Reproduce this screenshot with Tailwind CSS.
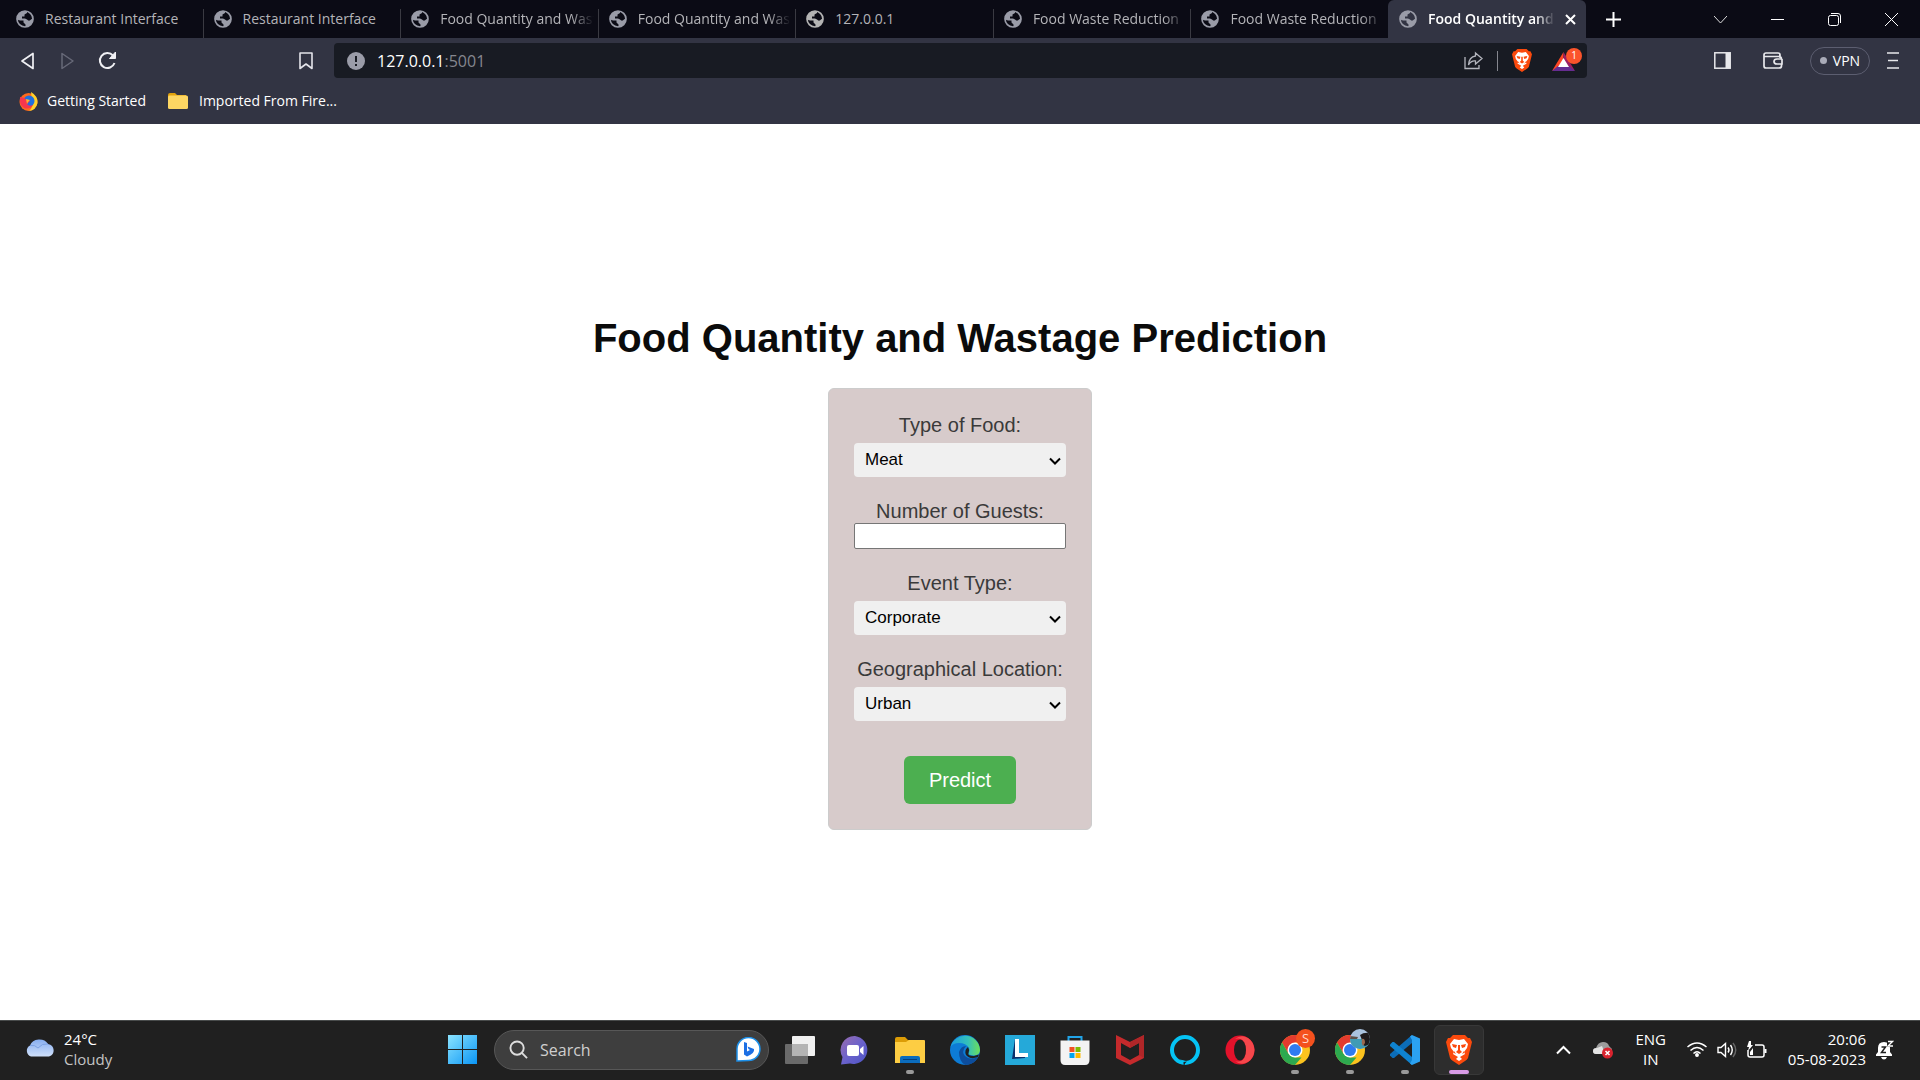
<!DOCTYPE html>
<html lang="en">
<head>
  <meta charset="UTF-8" />
  <meta name="viewport" content="width=device-width, initial-scale=1.0" />
  <title>Food Quantity and Wastage Prediction</title>
  <script src="https://cdn.jsdelivr.net/npm/@tailwindcss/browser@4"></script>
</head>
<body class="flex min-h-screen flex-col bg-white font-['Open_Sans','Noto_Sans',sans-serif]">
  <!-- shared icons -->
  <svg class="hidden">
    <defs>
      <symbol id="globe" viewBox="0 0 18 18">
        <circle cx="9" cy="9" r="8" fill="none" stroke="currentColor" stroke-width="1.7" />
        <path fill="currentColor" d="M9 1C4 1 .8 5 1 9.500L4 10.500H7.500V12.500L9.500 14.500V17C14 16.500 17 13 17 9V8L15 9.500C14 11 12 11 11 9.500L9 8.500H6V6.500H8.500V4.500L11 3V1.500Z" />
      </symbol>
      <symbol id="lion" viewBox="0 0 26 30">
        <path d="M7 0H19L22 3H24L26 7L25 11L22 23Q21 25 19 26L13 30L7 26Q5 25 4 23L1 11L0 7L2 3H4Z" fill="#fb4a0d" />
        <path d="M8 4L13 5L18 4L22 9L21 13L18 17L19 19L14 22L16 24L13 26L10 24L12 22L7 19L8 17L5 13L4 9Z" fill="#fff" />
        <path d="M6 9L11 10L10 13L7 12ZM20 9L15 10L16 13L19 12ZM12 10H14V15L16 17L13 19L10 17L12 15ZM8 16L10 19L8 18ZM18 16L16 19L18 18Z" fill="#fb4a0d" />
      </symbol>
      <symbol id="caret" viewBox="0 0 12 8">
        <path d="M1 1.500L6 6.500L11 1.500" fill="none" stroke="currentColor" stroke-width="2" />
      </symbol>
      <symbol id="chrome" viewBox="0 0 30 30">
        <circle cx="15" cy="15" r="15" fill="#fcc31e" />
        <path d="M2 7.500A15 15 0 0 1 28 7.500H15L8.500 18.750Z" fill="#e33b2e" />
        <path d="M2 7.500L8.500 18.750L15 22.500H21.500L15 30A15 15 0 0 1 2 7.500Z" fill="#2da94f" />
        <circle cx="15" cy="15" r="7.500" fill="#fff" />
        <circle cx="15" cy="15" r="6" fill="#2f7bf0" />
      </symbol>
    </defs>
  </svg>

  <header class="bg-[#323443] text-white">
    <!-- tab strip -->
    <div class="flex h-[38px] bg-[#0b0b15] text-sm text-[#b4b4b8]">
      <div class="flex min-w-0 flex-1 pl-1.5">
        <a href="#" class="flex min-w-0 flex-1 items-center gap-[11px] pr-1 pl-2.5"><svg class="size-[18px] shrink-0 text-[#9a9ca8]"><use href="#globe" /></svg><span class="overflow-hidden whitespace-nowrap">Restaurant Interface</span></a>
        <span class="mt-[9px] w-px bg-[#3a3a42]"></span>
        <a href="#" class="flex min-w-0 flex-1 items-center gap-[11px] pr-1 pl-2.5"><svg class="size-[18px] shrink-0 text-[#9a9ca8]"><use href="#globe" /></svg><span class="overflow-hidden whitespace-nowrap">Restaurant Interface</span></a>
        <span class="mt-[9px] w-px bg-[#3a3a42]"></span>
        <a href="#" class="flex min-w-0 flex-1 items-center gap-[11px] pr-1 pl-2.5"><svg class="size-[18px] shrink-0 text-[#9a9ca8]"><use href="#globe" /></svg><span class="overflow-hidden mask-r-from-85% whitespace-nowrap">Food Quantity and Wastage Prediction</span></a>
        <span class="mt-[9px] w-px bg-[#3a3a42]"></span>
        <a href="#" class="flex min-w-0 flex-1 items-center gap-[11px] pr-1 pl-2.5"><svg class="size-[18px] shrink-0 text-[#9a9ca8]"><use href="#globe" /></svg><span class="overflow-hidden mask-r-from-85% whitespace-nowrap">Food Quantity and Wastage Prediction</span></a>
        <span class="mt-[9px] w-px bg-[#3a3a42]"></span>
        <a href="#" class="flex min-w-0 flex-1 items-center gap-[11px] pr-1 pl-2.5"><svg class="size-[18px] shrink-0 text-[#b4b4b4]"><use href="#globe" /></svg><span class="overflow-hidden whitespace-nowrap">127.0.0.1</span></a>
        <span class="mt-[9px] w-px bg-[#3a3a42]"></span>
        <a href="#" class="flex min-w-0 flex-1 items-center gap-[11px] pr-1 pl-2.5"><svg class="size-[18px] shrink-0 text-[#9a9ca8]"><use href="#globe" /></svg><span class="flex-1 overflow-hidden mask-r-from-85% whitespace-nowrap">Food Waste Reduction</span></a>
        <span class="mt-[9px] w-px bg-[#3a3a42]"></span>
        <a href="#" class="flex min-w-0 flex-1 items-center gap-[11px] pr-1 pl-2.5"><svg class="size-[18px] shrink-0 text-[#9a9ca8]"><use href="#globe" /></svg><span class="flex-1 overflow-hidden mask-r-from-85% whitespace-nowrap">Food Waste Reduction</span></a>
        <div class="flex w-[198px] shrink-0 items-center rounded-t-md bg-[#323443] pr-2.5 pl-[11px]">
          <a href="#" class="flex min-w-0 flex-1 items-center gap-[11px] font-semibold text-white"><svg class="size-[18px] shrink-0 text-[#9a9ca8]"><use href="#globe" /></svg><span class="overflow-hidden mask-r-from-85% whitespace-nowrap">Food Quantity and Wastage</span></a>
          <button aria-label="Close tab" class="ml-2.5"><svg class="size-[11px]" viewBox="0 0 11 11" fill="none" stroke="#fff" stroke-width="2"><path d="M1 1L10 10M10 1L1 10" /></svg></button>
        </div>
      </div>
      <div class="flex w-[334px] shrink-0 items-center text-white">
        <button aria-label="New tab" class="ml-5"><svg class="size-[15px]" viewBox="0 0 15 15" stroke="#fff" stroke-width="2"><path d="M7.500 0V15M0 7.500H15" /></svg></button>
        <div class="flex flex-1 items-center justify-end gap-11 pr-[22px]">
          <button aria-label="Search tabs"><svg class="size-[13px]" viewBox="0 0 13 13" fill="none" stroke="#ddd"><path d="M0 3L6.500 10L13 3" /></svg></button>
          <button aria-label="Minimize"><svg class="size-[13px]" viewBox="0 0 13 13" stroke="#fff"><path d="M0 6.500H13" /></svg></button>
          <button aria-label="Restore"><svg class="size-[13px]" viewBox="0 0 13 13" fill="none" stroke="#fff"><rect x=".5" y="2.500" width="10" height="10" rx="2" /><path d="M3 .5H10Q12.500 .5 12.500 3V10" /></svg></button>
          <button aria-label="Close window"><svg class="size-[13px]" viewBox="0 0 13 13" stroke="#fff"><path d="M0 0L13 13M13 0L0 13" /></svg></button>
        </div>
      </div>
    </div>

    <!-- toolbar -->
    <div class="flex h-[45px] items-center">
      <div class="flex w-[334px] shrink-0 items-center pr-[21px] pl-5">
        <button aria-label="Back"><svg class="h-[18px] w-[15px]" viewBox="0 0 15 18" fill="none" stroke="#f0f0f4" stroke-width="1.700" stroke-linejoin="round"><path d="M13 1.500V16.500L2 9Z" /></svg></button>
        <button aria-label="Forward" class="ml-[26px]"><svg class="h-[18px] w-[15px]" viewBox="0 0 15 18" fill="none" stroke="#676978" stroke-width="1.500" stroke-linejoin="round"><path d="M1 1.500V16.500L12 9Z" /></svg></button>
        <button aria-label="Reload" class="ml-[22px]"><svg class="size-[19px]" viewBox="0 0 19 19" fill="none" stroke="#f0f0f4" stroke-width="2"><path d="M15 4.500A7.500 7.500 0 1 0 16.500 12" /><path d="M17.500 1V7.500H11.500Z" fill="#f0f0f4" stroke-width="1" /></svg></button>
        <button aria-label="Bookmark this page" class="ml-auto"><svg class="h-[18px] w-3.5" viewBox="0 0 14 18" fill="none" stroke="#e4e4ea" stroke-width="1.600" stroke-linejoin="round"><path d="M1 1H13V16.500L7 12L1 16.500Z" /></svg></button>
      </div>
      <div class="flex h-[35px] min-w-0 flex-1 items-center rounded bg-[#181b23] pr-[5px] pl-[13px]">
        <svg class="size-[18px]" viewBox="0 0 18 18"><circle cx="9" cy="9" r="9" fill="#9a9ca8" /><path d="M9 4V10M9 12V14" stroke="#181b23" stroke-width="2" /></svg>
        <a href="#" class="ml-3 text-base text-white">127.0.0.1<span class="text-[#85878f]">:5001</span></a>
        <div class="ml-auto flex items-center">
          <button aria-label="Share"><svg class="size-[19px]" viewBox="0 0 19 19" fill="none" stroke="#b4b6be" stroke-width="1.300"><path d="M1 6V17.500H15V14" /><path d="M11.500 2L18 7.500L11.500 13V10Q7 9.500 4.500 14Q5 6 11.500 5Z" /></svg></button>
          <span class="ml-3.5 h-5 w-px bg-[#85878f]"></span>
          <button aria-label="Brave Shields" class="ml-3.5"><svg class="h-[23px] w-5"><use href="#lion" /></svg></button>
          <button aria-label="Brave Rewards" class="relative ml-5">
            <svg class="h-[22px] w-[30px]" viewBox="0 0 30 22"><path d="M11.500 2L0 21L11.500 15Z" fill="#ff4724" /><path d="M11.500 2L23 21L11.500 15Z" fill="#9e1f63" /><path d="M0 21H23L17 16H6Z" fill="#662d91" /><path d="M11.500 8L6 17H17Z" fill="#fff" /></svg>
            <span class="absolute -top-0.5 right-0 flex size-4 items-center justify-center rounded-full bg-[#fb542b] text-[10px] text-white">1</span>
          </button>
        </div>
      </div>
      <div class="flex w-[333px] shrink-0 items-center justify-end pr-[21px]">
        <button aria-label="Sidebar"><svg class="size-[17px]" viewBox="0 0 17 17"><rect x=".8" y=".8" width="15.400" height="15.400" fill="none" stroke="#e8e8ec" stroke-width="1.500" /><path d="M11.500 1H16V16H11.500Z" fill="#e8e8ec" /></svg></button>
        <button aria-label="Wallet" class="ml-8"><svg class="h-[17px] w-5" viewBox="0 0 20 17" fill="none" stroke="#e8e8ec" stroke-width="1.700"><path d="M17 6V3Q17 1 15 1H3Q1 1 1 3V14Q1 16 3 16H16Q18.500 16 18.500 14V12M1 4.500H16Q18.500 4.500 18.500 7H14Q11 7 11 9.500Q11 12 14 12H19V7" /></svg></button>
        <button class="ml-[27px] flex h-7 w-[60px] items-center justify-center gap-1.5 rounded-full border border-[#5c5e70] text-sm"><span class="size-[7px] rounded-full bg-[#a9abb8]"></span>VPN</button>
        <button aria-label="Menu" class="ml-[17px]"><svg class="h-[17px] w-3" viewBox="0 0 12 17" stroke="#e8e8ec" stroke-width="1.700"><path d="M0 1H12M1 8.500H11M0 16H12" /></svg></button>
      </div>
    </div>

    <!-- bookmarks -->
    <nav class="flex h-[41px] items-start gap-[22px] pt-2 pl-[19px] text-sm">
      <a href="#" class="flex items-center gap-[9px]">
        <svg class="size-[19px]" viewBox="0 0 19 19"><circle cx="9.500" cy="10" r="9" fill="#ff6a1a" /><path d="M12 0Q19 4 18.500 11Q17 18 10 19Q15 15 13 8Z" fill="#ffd02a" /><circle cx="10" cy="9" r="5.500" fill="#1f6fe0" /><path d="M1 5Q5 5 8 8L11 9Q9 11 8 12Q10 15 14 13Q11 18 5 16Q0 13 1 5Z" fill="#f6364e" /><path d="M7 7L11 8L9 10L8 12Z" fill="#ffb62a" /></svg>
        Getting Started
      </a>
      <a href="#" class="flex items-center gap-[11px]">
        <svg class="h-4 w-5" viewBox="0 0 20 16"><path d="M0 2Q0 0 2 0H7L9 2H18V6H0Z" fill="#e2a20c" /><rect y="2.500" width="20" height="13.500" rx="1.500" fill="#fdd663" /></svg>
        Imported From Fire...
      </a>
    </nav>
  </header>

  <main class="flex flex-1 flex-col items-center justify-center gap-[27px] font-['Liberation_Sans',Arial,sans-serif]">
    <h1 class="text-[40px] leading-[46px] font-bold text-[#0b0b0b]">Food Quantity and Wastage Prediction</h1>
    <form class="flex w-[264px] flex-col gap-[23px] rounded-md border border-[#ccc] bg-[#d7cbcb] p-[25px] text-center text-xl leading-[23px] text-[#3a3a3a]">
      <div class="flex flex-col gap-1.5">
        <label for="food">Type of Food:</label>
        <div class="relative flex text-black">
          <select id="food" class="h-[34px] flex-1 appearance-none rounded bg-[#f0f0f0] px-[11px] text-[17px]">
            <option>Meat</option>
            <option>Vegetables</option>
          </select>
          <svg class="pointer-events-none absolute top-3.5 right-[5px] h-2 w-3"><use href="#caret" /></svg>
        </div>
      </div>
      <div class="flex flex-col">
        <label for="guests">Number of Guests:</label>
        <input id="guests" type="text" class="h-[26px] rounded-xs border border-[#767676] bg-white px-1 text-[17px] text-black" />
      </div>
      <div class="flex flex-col gap-1.5">
        <label for="event">Event Type:</label>
        <div class="relative flex text-black">
          <select id="event" class="h-[34px] flex-1 appearance-none rounded bg-[#f0f0f0] px-[11px] text-[17px]">
            <option>Corporate</option>
            <option>Wedding</option>
          </select>
          <svg class="pointer-events-none absolute top-3.5 right-[5px] h-2 w-3"><use href="#caret" /></svg>
        </div>
      </div>
      <div class="flex flex-col gap-1.5">
        <label for="location" class="whitespace-nowrap">Geographical Location:</label>
        <div class="relative flex text-black">
          <select id="location" class="h-[34px] flex-1 appearance-none rounded bg-[#f0f0f0] px-[11px] text-[17px]">
            <option>Urban</option>
            <option>Rural</option>
          </select>
          <svg class="pointer-events-none absolute top-3.5 right-[5px] h-2 w-3"><use href="#caret" /></svg>
        </div>
      </div>
      <button type="button" class="mt-3 h-12 w-28 self-center rounded-md bg-[#4caf50] text-xl text-white">Predict</button>
    </form>
  </main>

  <footer class="grid h-[60px] grid-cols-[1fr_auto_1fr] items-center border-t border-[#484b4b] bg-[#202020] pb-0.5 text-white">
    <!-- weather -->
    <a href="#" class="flex items-center gap-[9px] pb-0.5 pl-[25px] text-[15px] leading-5">
      <svg class="mb-1 h-5 w-[30px]" viewBox="0 0 30 20">
        <defs><linearGradient id="cloud" x2="0" y2="1"><stop stop-color="#88aef0" /><stop offset="1" stop-color="#cfe0fa" /></linearGradient></defs>
        <path d="M6 19.500A6 6 0 0 1 5 8.500A10 9 0 0 1 23 7A7 6.500 0 0 1 24 19.500Z" fill="url(#cloud)" />
        <path d="M5 8.500Q10 7.500 13 11Q17 6 23 7" fill="none" stroke="#7da2e4" />
      </svg>
      <span>24°C<br /><span class="text-[#c4c4c4]">Cloudy</span></span>
    </a>

    <!-- pinned apps -->
    <div class="flex items-center">
      <button aria-label="Start" class="flex w-[60px] justify-center pr-1">
        <svg class="size-[29px]" viewBox="0 0 29 29"><defs><linearGradient id="win" x2="1" y2="1"><stop stop-color="#8be4ff" /><stop offset="1" stop-color="#0a95f5" /></linearGradient></defs><path d="M0 0H14V14H0ZM15 0H29V14H15ZM0 15H14V29H0ZM15 15H29V29H15Z" fill="url(#win)" /></svg>
      </button>
      <div class="flex h-10 w-[275px] items-center rounded-full border border-[#575757] bg-[#3e3e3e] pr-[7px] pl-3.5">
        <svg class="size-[19px] shrink-0" viewBox="0 0 20 20" fill="none" stroke="#ddd" stroke-width="2"><circle cx="8.500" cy="8.500" r="7" /><path d="M13.500 13.500L19 19" /></svg>
        <input type="text" aria-label="Search" placeholder="Search" class="ml-3 min-w-0 flex-1 text-base placeholder:text-[#cfcfcf]" />
        <svg class="size-[25px] shrink-0" viewBox="0 0 25 25"><path d="M1 24V12A11.500 11.500 0 1 1 12.500 23.500Z" fill="#fff" stroke="#1c8fe8" stroke-width="1.500" /><path d="M8 5L11 6V14.500L14 13L12.500 12L11.500 9.500L18 12Q19 16 11 19.500L8 17.500Z" fill="#1c6fe4" /></svg>
      </div>
      <div class="w-[3px]"></div>
      <button aria-label="Task view" class="flex w-[55px] justify-center">
        <svg class="size-[30px]" viewBox="0 0 30 30"><rect x="7" y="1" width="23" height="20" rx="1" fill="#f0f0f0" /><rect y="9" width="23" height="20" rx="1" fill="#6a6a6a" /><path d="M7 9H23V21H7Z" fill="#b4b4b4" /></svg>
      </button>
      <button aria-label="Chat" class="flex w-[55px] justify-center">
        <svg class="size-[30px]" viewBox="0 0 30 30"><defs><linearGradient id="chat" x2="1" y2="1"><stop stop-color="#9a6cae" /><stop offset=".5" stop-color="#6b62cc" /><stop offset="1" stop-color="#4c53c4" /></linearGradient></defs><path d="M15 1A14 14 0 1 1 10 28.500L1 29.500L2.500 22A14 14 0 0 1 15 1Z" fill="url(#chat)" /><rect x="7" y="10" width="12" height="11" rx="2" fill="#fff" /><path d="M20 14L23.500 11V20L20 17Z" fill="#fff" /></svg>
      </button>
      <button aria-label="File Explorer" class="relative flex w-[55px] justify-center">
        <svg class="size-[30px]" viewBox="0 0 30 30"><path d="M0 4Q0 2 2 2H10L13 5H20V9H0Z" fill="#dc9c06" /><path d="M0 7H11L14 5H29Q30 5 30 6V28H0Z" fill="#fdcd43" /><path d="M5 28V23Q5 21 7 21H23Q25 21 25 23V28Z" fill="#0b6cbd" /><path d="M8 24.500H22" stroke="#053f7c" /></svg>
        <span class="absolute top-[35px] h-1 w-2 rounded-full bg-[#9a9a9a]"></span>
      </button>
      <button aria-label="Edge" class="flex w-[55px] justify-center">
        <svg class="size-[30px]" viewBox="0 0 30 30"><defs><linearGradient id="edge" x2="1"><stop stop-color="#199ce0" /><stop offset=".6" stop-color="#35c1b8" /><stop offset="1" stop-color="#6ddf58" /></linearGradient></defs><circle cx="15" cy="15" r="15" fill="#0d7cd6" /><path d="M.5 12A15 15 0 0 1 30 15Q30 20 24 20.500Q18 20.500 18.500 18Q20 16 19 13Q16 8 9 8Q3 8 .5 12Z" fill="url(#edge)" /><path d="M9 17Q11 11 16 11Q11 17 15 21Q20 26 28 22Q24 30 15 30Q9 26 9 17Z" fill="#0d4d9c" /><path d="M18.500 18Q17 21 24 21L29 19.500L28 22Q20 25 16 20Q14 15 18 12Q20 15 18.500 18Z" fill="#202020" /></svg>
      </button>
      <button aria-label="Lenovo Vantage" class="flex w-[55px] justify-center">
        <svg class="size-[30px]" viewBox="0 0 30 30"><path d="M0 0H30V30H0Z" fill="#25a9d9" /><path d="M10 4L7 24L10 22ZM7 24L20 23V22H10Z" fill="#0b2f6c" /><path d="M10 4H14V18H23V22H10Z" fill="#fff" /></svg>
      </button>
      <button aria-label="Microsoft Store" class="flex w-[55px] justify-center">
        <svg class="size-[30px]" viewBox="0 0 30 30"><path d="M8.500 7V2H21.500V7" fill="none" stroke="#21a4e8" stroke-width="2" /><path d="M.5 5.500H29.500V25Q29.500 30 25 30H5Q.5 30 .5 25Z" fill="#f3f3f3" /><path d="M9.500 12H14.500V17H9.500Z" fill="#f25022" /><path d="M15.500 12H20.500V17H15.500Z" fill="#7fba00" /><path d="M9.500 18H14.500V23H9.500Z" fill="#00a4ef" /><path d="M15.500 18H20.500V23H15.500Z" fill="#ffb900" /></svg>
      </button>
      <button aria-label="McAfee" class="flex w-[55px] justify-center">
        <svg class="size-[30px]" viewBox="0 0 30 30"><path d="M1 0L15 7L29 0V23L15 30L1 23Z" fill="#c52a2c" /><path d="M6 8L15 13L24 8V20L15 25L6 20Z" fill="#202020" /><path d="M15 7L29 0V23L24 20V8L15 13Z" fill="#b02628" /></svg>
      </button>
      <button aria-label="Alexa" class="flex w-[55px] justify-center">
        <svg class="size-[30px]" viewBox="0 0 30 30"><circle cx="15" cy="15" r="13" fill="none" stroke="#05c3f4" stroke-width="4" /><path d="M8 24Q13 25 13 30L16 28V26Z" fill="#05c3f4" /><path d="M13.500 30V27L17 26.500Q14.500 28 14.500 30Z" fill="#202020" /></svg>
      </button>
      <button aria-label="Opera" class="flex w-[55px] justify-center">
        <svg class="size-[30px]" viewBox="0 0 30 30"><ellipse cx="15" cy="15" rx="14.500" ry="14.500" fill="#e3122b" /><path d="M10 4Q16 -1 23 3Q29 7 29.500 15Q29 23 23 27Q16 31 10 26Q20 29 21 15Q20 1 10 4Z" fill="#f6474b" /><ellipse cx="15" cy="15" rx="6" ry="10.500" fill="#202020" /></svg>
      </button>
      <button aria-label="Chrome, profile S" class="relative flex w-[55px] justify-center">
        <svg class="size-[30px]"><use href="#chrome" /></svg>
        <span class="absolute -top-1.5 right-[7px] flex size-[19px] items-center justify-center rounded-full bg-[#f4511e] text-[13px] leading-none text-[#ffd9cc]">S</span>
        <span class="absolute top-[35px] h-1 w-2 rounded-full bg-[#9a9a9a]"></span>
      </button>
      <button aria-label="Chrome, second profile" class="relative flex w-[55px] justify-center">
        <svg class="size-[30px]"><use href="#chrome" /></svg>
        <svg class="absolute -top-1.5 right-[7px] size-5" viewBox="0 0 20 20"><defs><clipPath id="face"><circle cx="10" cy="10" r="10" /></clipPath></defs><g clip-path="url(#face)"><path d="M0 0H20V20H0Z" fill="#a9c3df" /><path d="M0 10H20V20H0Z" fill="#3f9bb5" /><path d="M0 7L8 8L7 10H0Z" fill="#5d5148" /><path d="M10 6Q14 3 20 4V15L15 17Q12 16 12 11Z" fill="#1d1a1b" /><path d="M12 10Q15 9 15 14L13 17Q11 14 12 10Z" fill="#9c6a50" /></g></svg>
        <span class="absolute top-[35px] h-1 w-2 rounded-full bg-[#9a9a9a]"></span>
      </button>
      <button aria-label="Visual Studio Code" class="relative flex w-[55px] justify-center">
        <svg class="size-[30px]" viewBox="0 0 30 30"><path d="M22 0V8L4 23L2.500 23L0 20.500V19Z" fill="#0c6db8" /><path d="M0 11V9.500L2.500 7H4L22 22V30Z" fill="#0f83d0" /><path d="M22 0L30 3.500V26.500L22 30L20 28.500L22 25V5L20 1.500Z" fill="#2ba2f2" /></svg>
        <span class="absolute top-[35px] h-1 w-2 rounded-full bg-[#9a9a9a]"></span>
      </button>
      <button aria-label="Brave" class="relative mx-0.5 flex size-[50px] items-center justify-center rounded-md border border-[#383838] bg-[#2d2d2d]">
        <svg class="h-[30px] w-[26px]"><use href="#lion" /></svg>
        <span class="absolute bottom-0 h-1 w-5 rounded-full bg-[#d99be6]"></span>
      </button>
    </div>

    <!-- system tray -->
    <div class="flex items-center justify-end pr-[26px] text-[15px] leading-5">
      <button aria-label="Show hidden icons"><svg class="h-2.5 w-[15px]" viewBox="0 0 15 10" fill="none" stroke="#fff" stroke-width="2"><path d="M1 8.500L7.500 2L14 8.500" /></svg></button>
      <svg class="ml-[22px] h-[18px] w-5" viewBox="0 0 20 18"><path d="M3 13Q0 13 0 10Q0 7 3 7Q5 1 10 1Q15 1 16 5L19 8V13Z" fill="#9c9c9c" /><path d="M3 13Q0 13 0 10Q0 7 4 7L9 5L12 13Z" fill="#e4e4e4" /><circle cx="14.500" cy="12" r="5.500" fill="#d9232e" /><path d="M12.500 10L16.500 14M16.500 10L12.500 14" stroke="#fff" stroke-width="1.500" /></svg>
      <button class="ml-[22px] w-8 pb-0.5 text-center">ENG<br />IN</button>
      <button aria-label="Network, volume and battery" class="ml-5 flex items-center gap-2.5">
        <svg class="h-[15px] w-5" viewBox="0 0 20 15" fill="none" stroke="#fff" stroke-width="1.500"><path d="M.5 5Q10 -3 19.500 5M3.500 8.500Q10 2.500 16.500 8.500M6.500 11.500Q10 8 13.500 11.500" /><circle cx="10" cy="13" r="1.200" fill="#fff" /></svg>
        <svg class="h-4 w-5" viewBox="0 0 20 16" fill="none" stroke="#fff" stroke-width="1.400"><path d="M1 5.500H4L8.500 1.500V14.500L4 10.500H1Z" /><path d="M11 5.500Q13 8 11 10.500M13.500 3Q17 8 13.500 13" /><path d="M16 1Q21.500 8 16 15" stroke="#666" /></svg>
        <svg class="h-[17px] w-5" viewBox="0 0 20 17" fill="none" stroke="#fff" stroke-width="1.500"><path d="M8 4H15Q17 4 17 6V14Q17 16 15 16H3Q1 16 1 14V9" /><path d="M18.500 8V12" stroke-width="2" /><path d="M4 0H2L0 6H2L1 10L6 4H4Z" fill="#fff" stroke="none" /><path d="M3 14V11L6 7V14Z" fill="#fff" stroke="none" /></svg>
      </button>
      <button class="ml-[21px] pb-0.5 text-right">20:06<br />05-08-2023</button>
      <button aria-label="Notifications" class="ml-2.5"><svg class="h-5 w-[18px]" viewBox="0 0 18 20"><path d="M8 2Q14 2 14 8V12L16 14.500V16H0V14.500L2 12V8Q2 2 8 2Z" fill="#fff" /><path d="M5 17H11Q10 19.500 8 19.500Q6 19.500 5 17Z" fill="#fff" /><path d="M5.500 7H9.500L5.500 12.500H10" fill="none" stroke="#202020" stroke-width="1.500" /><path d="M11 1H18V7H11Z" fill="#202020" /><path d="M12 1.500H16.500L12 6H17" fill="none" stroke="#fff" stroke-width="1.300" /></svg></button>
    </div>
  </footer>
</body>
</html>
